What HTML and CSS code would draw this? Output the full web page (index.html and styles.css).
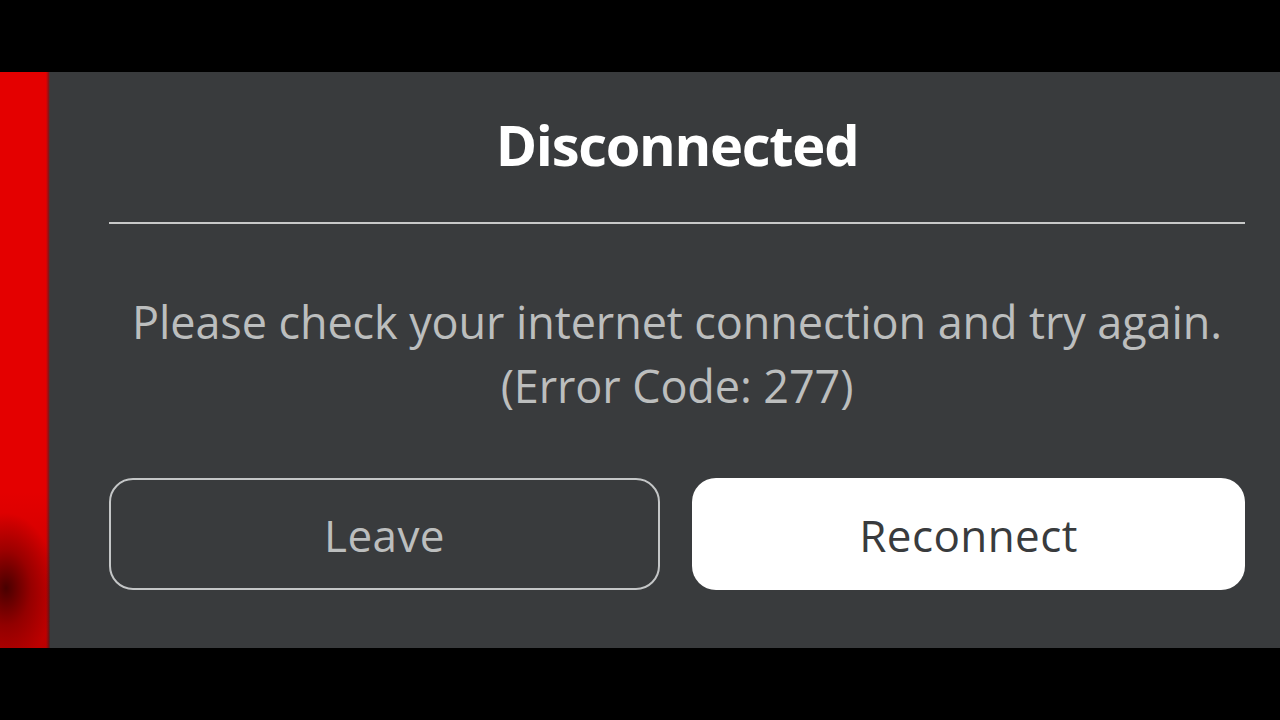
FILE: index.html
```html
<!DOCTYPE html>
<html>
<head>
<meta charset="utf-8">
<link rel="stylesheet" href="styles.css">
</head>
<body>
<div class="screen">
  <div class="bar"></div>
  <div class="main">
    <div class="red-strip"></div>
    <div class="panel">
      <h1 class="title">Disconnected</h1>
      <div class="divider"></div>
      <p class="message">Please check your internet connection and try again.<br>(Error Code: 277)</p>
      <div class="buttons">
        <button class="btn btn-leave">Leave</button>
        <button class="btn btn-reconnect">Reconnect</button>
      </div>
    </div>
  </div>
  <div class="bar"></div>
</div>
</body>
</html>
```
FILE: styles.css
```css
html, body {
  margin: 0;
  padding: 0;
  background: #000;
}
.screen {
  width: 1280px;
  height: 720px;
  display: flex;
  flex-direction: column;
  font-family: "Open Sans", "Noto Sans", sans-serif;
}
.bar {
  height: 72px;
  background: #000;
}
.main {
  height: 576px;
  display: flex;
}
.red-strip {
  width: 50px;
  background:
    radial-gradient(ellipse 50px 75px at 6px 516px, rgba(55,0,0,0.88), rgba(100,0,0,0.5) 50%, rgba(160,0,0,0) 100%),
    linear-gradient(to bottom, rgba(0,0,0,0) 0, rgba(0,0,0,0) 420px, rgba(60,0,0,0.25) 576px),
    linear-gradient(to right, #e40000 0, #e40000 46px, #8a1416 48.5px, #3b3c3e 50px);
}
.panel {
  flex: 1;
  background: #393b3d;
  padding: 0 35px 0 59px;
  display: flex;
  flex-direction: column;
}
.title {
  margin: 0;
  padding-top: 32px;
  height: 116px;
  box-sizing: border-box;
  text-align: center;
  color: #ffffff;
  font-size: 56px;
  font-weight: 700;
  line-height: 80px;
  letter-spacing: -1.3px;
}
.divider {
  height: 2px;
  background: #c8c9c9;
  margin-top: 34px;
}
.message {
  margin: 66px 0 0;
  text-align: center;
  color: #bcbebe;
  font-size: 45px;
  line-height: 64px;
  letter-spacing: -0.1px;
}
.buttons {
  display: flex;
  gap: 32px;
  margin-top: 60px;
}
.btn {
  height: 112px;
  border-radius: 24px;
  font-family: inherit;
  font-size: 44px;
  letter-spacing: 0.4px;
  box-sizing: border-box;
  padding: 2px 0 0;
}
.btn-leave {
  flex: 0 0 551px;
  background: transparent;
  border: 2px solid #c4c6c7;
  color: #bcbebe;
}
.btn-reconnect {
  flex: 1;
  background: #ffffff;
  border: 0;
  color: #393b3d;
}
```
